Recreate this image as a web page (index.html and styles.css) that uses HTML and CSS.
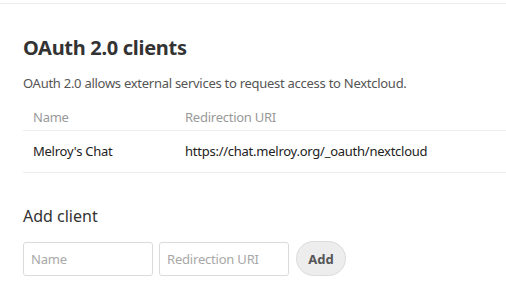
FILE: index.html
```html
<!DOCTYPE html>
<html lang="en">
<head>
<meta charset="utf-8">
<title>OAuth 2.0 clients</title>
<link rel="stylesheet" href="styles.css">
</head>
<body>
<div class="topbar"></div>
<section class="section">
  <h2 class="title">OAuth 2.0 clients</h2>
  <p class="desc">OAuth 2.0 allows external services to request access to Nextcloud.</p>
  <table class="grid">
    <thead>
      <tr><th class="col-name">Name</th><th>Redirection URI</th></tr>
    </thead>
    <tbody>
      <tr><td class="col-name">Melroy's Chat</td><td>https://chat.melroy.org/_oauth/nextcloud</td></tr>
    </tbody>
  </table>
  <h3 class="subtitle">Add client</h3>
  <form class="add-form">
    <input class="field" type="text" placeholder="Name">
    <input class="field" type="url" placeholder="Redirection URI">
    <button class="btn" type="button">Add</button>
  </form>
</section>
</body>
</html>
```

FILE: styles.css
```css
* { box-sizing: border-box; }
html, body { margin: 0; padding: 0; background: #fff; }
body {
  font-family: "Noto Sans", "Open Sans", "DejaVu Sans", sans-serif;
  font-size: 13px;
  color: #222;
}
.topbar {
  height: 4px;
  border-bottom: 1px solid #ededed;
}
.section {
  padding: 0 0 0 23px;
}
.title {
  margin: 29px 0 0;
  font-size: 20px;
  line-height: 30px;
  font-weight: 700;
  letter-spacing: -0.3px;
  color: #333;
}
.desc {
  margin: 11px 0 0;
  line-height: 18px;
  letter-spacing: -0.27px;
  color: #555;
}
.grid {
  width: 100%;
  border-collapse: collapse;
  margin-top: 6px;
}
.grid th, .grid td {
  text-align: left;
  line-height: 18px;
  padding: 0 10px;
  font-weight: 400;
  letter-spacing: -0.25px;
}
.grid th {
  padding-top: 10px;
  padding-bottom: 4px;
  color: #999;
  border-bottom: 1px solid #ededed;
}
.grid td {
  padding-top: 11px;
  padding-bottom: 12px;
  color: #222;
  border-bottom: 1px solid #ededed;
}
.grid .col-name { width: 152px; }
.subtitle {
  margin: 33px 0 0;
  font-size: 16px;
  line-height: 20px;
  font-weight: 400;
  color: #333;
}
.add-form {
  display: flex;
  align-items: center;
  margin-top: 15px;
}
.field {
  width: 130px;
  height: 34px;
  margin: 0 6px 0 0;
  padding: 0 7px;
  border: 1px solid #dbdbdb;
  border-radius: 3px;
  font-family: inherit;
  font-size: 13px;
  letter-spacing: -0.2px;
  color: #222;
  background: #fff;
  outline: none;
}
.field::placeholder { color: #a8a8a8; }
.btn {
  margin-left: 1px;
  width: 50px;
  height: 35px;
  border: 1px solid #dbdbdb;
  border-radius: 18px;
  background: #ededed;
  font-family: inherit;
  font-size: 13px;
  font-weight: 700;
  color: #555;
  padding: 0;
}
```
